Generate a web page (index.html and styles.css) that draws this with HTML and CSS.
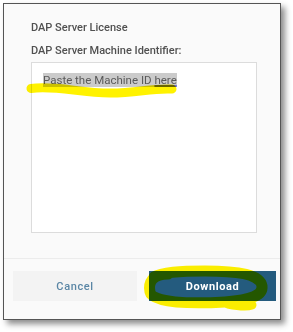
FILE: index.html
```html
<!DOCTYPE html>
<html lang="en">
<head>
  <meta charset="UTF-8" />
  <meta name="viewport" content="width=device-width, initial-scale=1" />
  <title>DAP Server License</title>
  <link rel="stylesheet" href="styles.css">
</head>
<body>
  <div class="dialog">
    <div class="dialog-body">
      <h2 class="dialog-title">DAP Server License</h2>
      <label class="field-label">DAP Server Machine Identifier:</label>
      <div class="machine-id">
        <span class="placeholder">Paste the Machine ID <span class="spell">here</span></span>
      </div>
    </div>
    <div class="dialog-footer">
      <button class="btn btn-cancel">Cancel</button>
      <button class="btn btn-download">Download</button>
    </div>
  </div>

  <!-- highlighter marks drawn over the screenshot -->
  <svg class="marker" width="293" height="332" viewBox="0 0 293 332">
    <path class="thin" d="M31 88.5 C55 85 80 93 110 93 C138 93 150 88 172 89" />
    <path d="M168 274 C152 274 148 283 150 292 C152 303 190 304 225 302 C252 300 263 295 262 286 C260 275 240 271 205 271 C180 271 162 272 154 277" />
    <path class="thin" d="M228 304 C238 306 246 307 252 305" />
  </svg>
</body>
</html>
```

FILE: styles.css
```css
* {
  box-sizing: border-box;
}

body {
  margin: 0;
  padding: 3px;
  background: #fff;
  font-family: Roboto, 'Liberation Sans', sans-serif;
  width: 293px;
  height: 332px;
  overflow: hidden;
}

.dialog {
  width: 278px;
  height: 317px;
  background: #fafafa;
  border: 1px solid #555;
  box-shadow: 4px 4px 6px rgba(0, 0, 0, 0.45);
  display: flex;
  flex-direction: column;
}

.dialog-body {
  padding: 17px 23px 0 27px;
  border-bottom: 1px solid #ececec;
  height: 255px;
}

.dialog-title {
  margin: 0;
  font-size: 11px;
  line-height: 14px;
  font-weight: 500;
  color: #505050;
}

.field-label {
  display: block;
  margin-top: 9px;
  font-size: 11px;
  line-height: 14px;
  font-weight: 500;
  color: #505050;
}

.machine-id {
  margin-top: 4px;
  height: 171px;
  background: #fff;
  border: 1px solid #dcdcdc;
  padding: 6px 11px;
}

.placeholder {
  font-size: 11.5px;
  line-height: 15px;
  color: #5a5a5a;
  background: #cbcbcb;
}

.spell {
  text-decoration: underline;
  text-decoration-color: #6a6ae0;
  text-decoration-thickness: 2px;
  text-underline-offset: 1px;
}

.dialog-footer {
  display: flex;
  gap: 12px;
  padding: 12px 3px 0 9px;
}

.btn {
  height: 30px;
  border: none;
  font-family: inherit;
  font-size: 11px;
  font-weight: 500;
  letter-spacing: 0.6px;
}

.btn-cancel {
  width: 124px;
  background: #f3f3f3;
  color: #5a86a5;
}

.btn-download {
  width: 127px;
  background: #245b7e;
  color: #fff;
  font-weight: 700;
}

.marker {
  position: absolute;
  top: 0;
  left: 0;
  mix-blend-mode: multiply;
  pointer-events: none;
}

.marker path {
  fill: none;
  stroke: #fff200;
  stroke-width: 11;
  stroke-linecap: round;
}

.marker path.thin {
  stroke-width: 9;
}
```
